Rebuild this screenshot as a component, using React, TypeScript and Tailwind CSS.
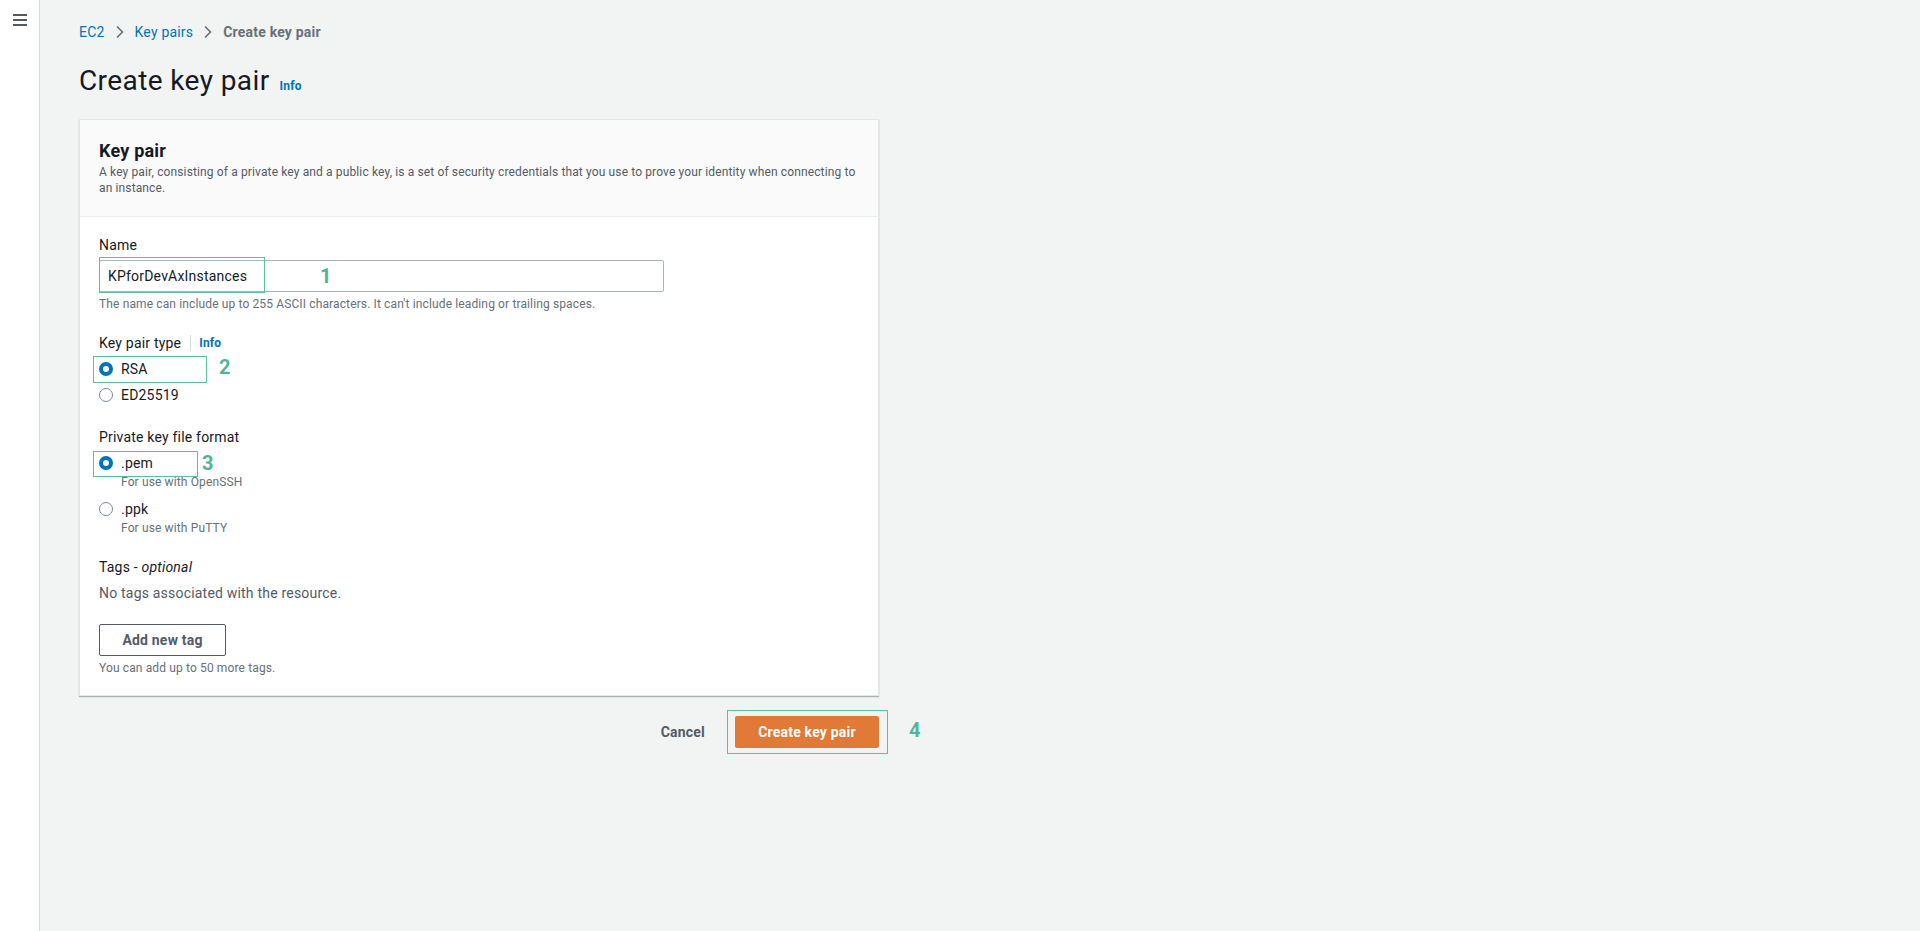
import React from "react";

const font = { fontFamily: "Roboto, 'Liberation Sans', Arial, sans-serif" };

function Radio({ checked }: { checked: boolean }) {
  return checked ? (
    <span className="block w-[14px] h-[14px] rounded-full border-[4px] border-[#0073bb] bg-white shrink-0" />
  ) : (
    <span className="block w-[14px] h-[14px] rounded-full border-[1.5px] border-[#7d8998] bg-white shrink-0" />
  );
}

function Num({ n }: { n: string }) {
  return (
    <span className="absolute text-[20px] leading-[20px] font-bold text-[#4fb596] [text-shadow:0_0_2px_#fff,0_0_2px_#fff]">
      {n}
    </span>
  );
}

function Chevron() {
  return (
    <svg width="10" height="14" viewBox="0 0 10 14" className="mx-[10px] shrink-0">
      <path d="M2 1.5 L7.5 7 L2 12.5" fill="none" stroke="#687078" strokeWidth="1.6" />
    </svg>
  );
}

export default function App() {
  return (
    <div className="flex min-h-[931px] w-full bg-[#f2f3f3] text-[#16191f] tracking-[0.2px]" style={font}>
      <aside className="w-[40px] shrink-0 bg-white border-r border-[#d5dbdb] flex justify-center pt-[14px]">
        <div className="flex flex-col gap-[3px] w-[14px] h-[12px]">
          <span className="block h-[2px] bg-[#545b64]" />
          <span className="block h-[2px] bg-[#545b64]" />
          <span className="block h-[2px] bg-[#545b64]" />
        </div>
      </aside>
      <main className="flex-1 pl-[39px] pt-[22px]">
        <nav className="flex items-center h-[20px] text-[14px] leading-[20px]">
          <span className="text-[#0073bb]">EC2</span>
          <Chevron />
          <span className="text-[#0073bb]">Key pairs</span>
          <Chevron />
          <span className="text-[#687078] font-bold">Create key pair</span>
        </nav>
        <div className="mt-[21px] flex items-baseline">
          <h1 className="text-[28px] leading-[36px] font-normal text-[#16191f] tracking-[0.4px]">Create key pair</h1>
          <span className="ml-[10px] text-[12px] font-bold text-[#0073bb]">Info</span>
        </div>

        <section className="mt-[20px] w-[800px] bg-white border border-[#e3e6e6] shadow-[0_1px_1px_0_rgba(0,28,36,0.3)]">
          <div className="bg-[#fafafa] border-b border-[#eaeded] px-[19px] pt-[20px] pb-[20px]">
            <h2 className="text-[18px] leading-[22px] font-bold">Key pair</h2>
            <p className="mt-[2px] text-[12px] leading-[16px] text-[#545b64] tracking-[0.13px]">
              A key pair, consisting of a private key and a public key, is a set of security credentials that you use to prove your identity when connecting to an instance.
            </p>
          </div>
          <div className="px-[19px] pt-[17px] pb-[19px]">
            <div className="text-[14px] leading-[22px]">Name</div>
            <div className="relative mt-[4px] w-[565px]">
              <div className="h-[32px] border border-[#aab7b8] rounded-[2px] flex items-center px-[8px] text-[14px]">
                KPforDevAxInstances
              </div>
              <div className="absolute left-0 top-[-3px] w-[166px] h-[36px] border border-[#5cbf9f]" />
              <span className="absolute left-[221px] top-[6px]">
                <Num n="1" />
              </span>
            </div>
            <div className="mt-[4px] text-[12px] leading-[16px] text-[#687078] tracking-[0.13px]">
              The name can include up to 255 ASCII characters. It can't include leading or trailing spaces.
            </div>

            <div className="mt-[20px] flex items-center text-[14px] leading-[22px]">
              <span>Key pair type</span>
              <span className="ml-[9px] mr-[8px] h-[16px] w-px bg-[#d5dbdb]" />
              <span className="text-[12px] font-bold text-[#0073bb]">Info</span>
            </div>
            <div className="mt-[4px] flex flex-col gap-[4px]">
              <div className="relative flex items-center h-[22px] text-[14px]">
                <Radio checked />
                <span className="ml-[8px]">RSA</span>
                <div className="absolute left-[-6px] top-[-2px] w-[114px] h-[27px] border border-[#5cbf9f]" />
                <span className="absolute left-[120px] top-[-1px]">
                  <Num n="2" />
                </span>
              </div>
              <div className="flex items-center h-[22px] text-[14px]">
                <Radio checked={false} />
                <span className="ml-[8px]">ED25519</span>
              </div>
            </div>

            <div className="mt-[20px] text-[14px] leading-[22px]">Private key file format</div>
            <div className="mt-[4px] flex flex-col">
              <div className="relative flex items-center h-[22px] text-[14px]">
                <Radio checked />
                <span className="ml-[8px]">.pem</span>
                <div className="absolute left-[-6px] top-[-1px] w-[105px] h-[26px] border border-[#5cbf9f]" />
                <span className="absolute left-[103px] top-[1px]">
                  <Num n="3" />
                </span>
              </div>
              <div className="pl-[22px] text-[12px] leading-[16px] text-[#687078] tracking-[0.13px]">For use with OpenSSH</div>
              <div className="mt-[8px] flex items-center h-[22px] text-[14px]">
                <Radio checked={false} />
                <span className="ml-[8px]">.ppk</span>
              </div>
              <div className="pl-[22px] text-[12px] leading-[16px] text-[#687078] tracking-[0.13px]">For use with PuTTY</div>
            </div>

            <div className="mt-[20px] text-[14px] leading-[22px]">
              Tags - <i>optional</i>
            </div>
            <div className="mt-[4px] text-[14px] leading-[22px] text-[#545b64]">No tags associated with the resource.</div>
            <button className="mt-[20px] h-[32px] w-[127px] border border-[#545b64] rounded-[2px] bg-white text-[14px] font-bold text-[#545b64] tracking-[0.2px]">
              Add new tag
            </button>
            <div className="mt-[4px] text-[12px] leading-[16px] text-[#687078] tracking-[0.13px]">You can add up to 50 more tags.</div>
          </div>
        </section>

        <div className="mt-[20px] w-[800px] flex justify-end items-center">
          <button className="h-[32px] px-[20px] text-[14px] font-bold text-[#545b64] tracking-[0.2px]">Cancel</button>
          <div className="relative ml-[10px]">
            <button className="h-[32px] w-[144px] rounded-[2px] bg-[#e07a36] text-white text-[14px] font-bold tracking-[0.2px]">
              Create key pair
            </button>
            <div className="absolute left-[-8px] top-[-6px] w-[161px] h-[44px] border border-[#5cbf9f]" />
            <span className="absolute left-[174px] top-[4px]">
              <Num n="4" />
            </span>
          </div>
        </div>
      </main>
    </div>
  );
}
